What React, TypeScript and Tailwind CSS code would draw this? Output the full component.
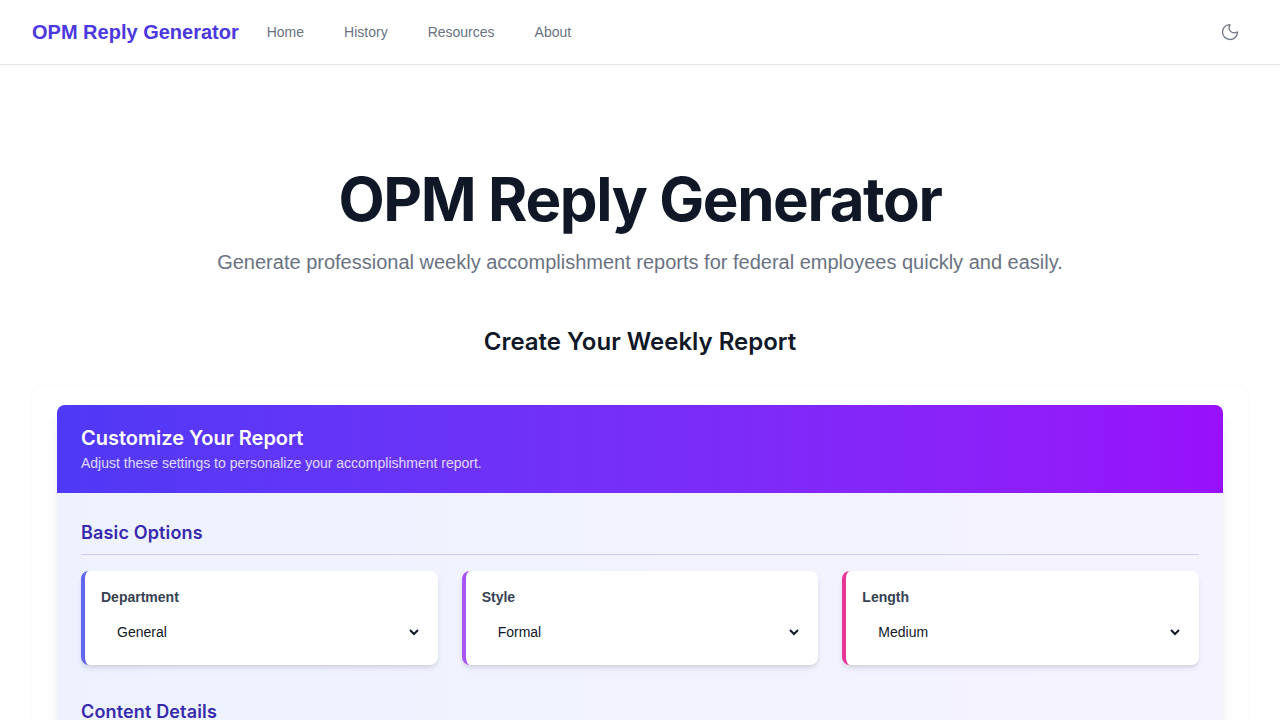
import { Moon } from "lucide-react";

const sans = "font-['Liberation_Sans',Arial,sans-serif]";
const head = "font-['Inter',sans-serif]";

function Field({ label, value, border }: { label: string; value: string; border: string }) {
  return (
    <div className={`flex flex-col rounded-lg border-l-4 bg-white p-4 shadow-md ${border}`}>
      <label className="mb-2 text-sm leading-5 font-bold text-gray-700">{label}</label>
      <select defaultValue={value} className="h-[34px] w-full bg-white px-3 text-sm text-gray-900 outline-none">
        <option>{value}</option>
      </select>
    </div>
  );
}

export default function App() {
  return (
    <div className={`h-screen overflow-hidden bg-white ${sans}`}>
      <nav className="flex h-[65px] items-center justify-between border-b border-gray-200 px-8 shadow-[0_1px_2px_rgba(0,0,0,0.03)]">
        <div className="flex items-center gap-7">
          <span className="text-xl font-bold text-[#4b38de]">OPM Reply Generator</span>
          <div className="flex items-center gap-10 text-sm text-gray-500">
            <a>Home</a>
            <a>History</a>
            <a>Resources</a>
            <a>About</a>
          </div>
        </div>
        <Moon className="mr-2 h-5 w-5 text-gray-500" strokeWidth={1.5} />
      </nav>
      <main className="flex flex-col items-center px-8 pt-[97px]">
        <h1 className={`text-[60px] leading-[75px] font-bold tracking-[-1.4px] text-gray-900 ${head}`}>OPM Reply Generator</h1>
        <p className="mt-[11px] text-xl leading-7 text-gray-500">
          Generate professional weekly accomplishment reports for federal employees quickly and easily.
        </p>
        <h2 className={`mt-[50px] text-2xl leading-8 font-semibold text-gray-900 ${head}`}>Create Your Weekly Report</h2>
        <section className="mt-[27px] w-full rounded-xl bg-white px-[25px] pt-[20px] shadow-[0_0_3px_rgba(0,0,0,0.035)]">
          <div className="overflow-hidden rounded-lg shadow-lg">
            <header className="h-[88px] bg-linear-to-r from-indigo-600 to-purple-600 px-6 pt-[20px] text-white">
              <h3 className={`text-xl leading-[26px] font-semibold ${head}`}>Customize Your Report</h3>
              <p className="mt-0.5 text-sm leading-5 text-white/80">Adjust these settings to personalize your accomplishment report.</p>
            </header>
            <div className="bg-linear-to-r from-indigo-50 to-violet-50 px-6 pt-[28px] pb-6">
              <h4 className={`border-b border-[#cdcdf5] pb-[9px] text-lg leading-6 font-semibold tracking-[0.15px] text-indigo-800 ${head}`}>Basic Options</h4>
              <div className="mt-4 grid grid-cols-3 gap-6">
                <Field label="Department" value="General" border="border-[#6366f1]" />
                <Field label="Style" value="Formal" border="border-[#a855f7]" />
                <Field label="Length" value="Medium" border="border-[#e8359a]" />
              </div>
              <h4 className={`mt-[35px] text-lg leading-6 font-semibold tracking-[0.15px] text-indigo-800 ${head}`}>Content Details</h4>
            </div>
          </div>
        </section>
      </main>
    </div>
  );
}
